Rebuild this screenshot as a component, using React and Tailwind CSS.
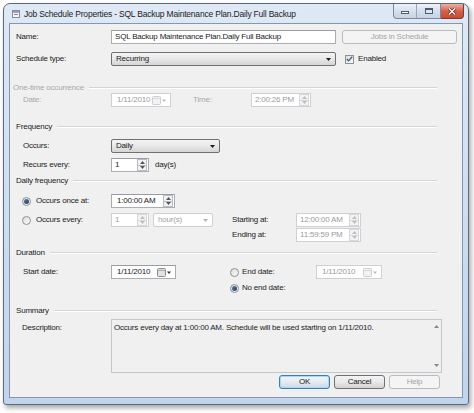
import React from 'react'

const ui = "font-['Liberation_Sans',Arial,sans-serif]"

function Arrow({ up, color = '#2b2b2b' }) {
  return (
    <svg width="5" height="3" viewBox="0 0 5 3">
      <path d={up ? 'M0 3H5L2.5 0Z' : 'M0 0H5L2.5 3Z'} fill={color} />
    </svg>
  )
}

function TextBox({ value, w, disabled, children, pad = 'pl-[3px]' }) {
  return (
    <div
      className={`${w} h-full shrink-0 flex items-center border bg-white ${
        disabled ? 'border-[#cdd0d4] text-[#9c9c9c]' : 'border-[#abadb3] border-t-[#9a9ca3]'
      }`}
    >
      <span className={`${pad} flex-1 whitespace-nowrap`}>{value}</span>
      {children}
    </div>
  )
}

function Spin({ value, w, disabled, pad }) {
  const edge = disabled ? 'border-[#d6d8db]' : 'border-[#b9bcc2]'
  const c = disabled ? '#bdbdbd' : '#555'
  return (
    <TextBox value={value} w={w} disabled={disabled} pad={pad}>
      <div className={`w-[10px] h-[12px] mr-[1px] flex flex-col border ${edge} bg-[#f3f3f3]`}>
        <div className={`flex-1 flex items-center justify-center border-b ${edge}`}>
          <Arrow up color={c} />
        </div>
        <div className="flex-1 flex items-center justify-center">
          <Arrow color={c} />
        </div>
      </div>
    </TextBox>
  )
}

function DatePick({ value, w, disabled }) {
  return (
    <TextBox value={value} w={w} disabled={disabled} pad="pl-[5px]">
      <svg width="15" height="9" viewBox="0 0 15 9" className="mr-[3px]">
        <rect x="0.5" y="0.5" width="8" height="8" rx="1" fill={disabled ? '#f2f2f2' : '#e2e2e2'} stroke={disabled ? '#cfcfcf' : '#8c8c8c'} />
        <path d="M1 2.5H8" stroke={disabled ? '#d8d8d8' : '#a8a8a8'} />
        <path d="M10 3.5H14L12 6Z" fill={disabled ? '#bcbcbc' : '#333'} />
      </svg>
    </TextBox>
  )
}

function Combo({ value, w, disabled }) {
  return (
    <div
      className={`${w} h-full shrink-0 flex items-center rounded-[2px] border ${
        disabled
          ? 'border-[#cdd0d4] bg-white text-[#a3a3a3]'
          : 'border-[#707070] bg-gradient-to-b from-[#f4f4f4] via-[#e8e8e8] to-[#d5d5d5]'
      }`}
    >
      <span className="pl-[4px] flex-1 whitespace-nowrap">{value}</span>
      <span className="mr-[4px] flex">
        <Arrow color={disabled ? '#b5b5b5' : '#1a1a1a'} />
      </span>
    </div>
  )
}

function Radio({ checked }) {
  return (
    <span className="w-[9px] h-[9px] shrink-0 rounded-full border border-[#8e9094] bg-gradient-to-br from-[#dcdcdc] to-[#fafafa] flex items-center justify-center">
      {checked && <span className="w-[5px] h-[5px] rounded-full bg-gradient-to-br from-[#5a7ea8] to-[#1f3c5e]" />}
    </span>
  )
}

function Button({ children, kind = 'normal', w = 'w-[51px]' }) {
  const look = {
    normal: 'border-[#707070] bg-gradient-to-b from-[#f3f3f3] via-[#e9e9e9] to-[#d3d3d3] text-[#1b1b1b]',
    default: 'border-[#3c7fb1] bg-gradient-to-b from-[#f1f6fa] via-[#e3ebf2] to-[#cfd9e3] text-[#1b1b1b] shadow-[inset_0_0_0_1px_#a8d8f3]',
    disabled: 'border-[#b7bcc0] bg-[#f4f4f4] text-[#a5a5a5]',
  }[kind]
  return (
    <div className={`${w} h-full shrink-0 flex items-center justify-center rounded-[3px] border ${look}`}>
      {children}
    </div>
  )
}

function Group({ title, muted, className = '' }) {
  return (
    <div className={`flex items-center h-[10px] pr-[25px] ${className}`}>
      <span className={muted ? 'pl-[3px] text-[#a9a9a9]' : 'pl-[6px]'}>{title}</span>
      <div className="flex-1 ml-[5px] h-[2px] border-t border-[#d2d4d8] border-b border-b-white" />
    </div>
  )
}

function Row({ className = '', children }) {
  return <div className={`flex items-center h-[14px] ${className}`}>{children}</div>
}

function Label({ children, indent = 'pl-[13px]', muted }) {
  return (
    <div className={`w-[101px] shrink-0 ${indent} ${muted ? 'text-[#a9a9a9]' : ''}`}>{children}</div>
  )
}

function RadioLabel({ checked, children }) {
  return (
    <div className="w-[101px] shrink-0 pl-[12px] flex items-center gap-[5px]">
      <Radio checked={checked} />
      <span>{children}</span>
    </div>
  )
}

function TitleBar() {
  return (
    <div className="h-[19px] shrink-0 flex items-start pr-[4px]">
      <div className="h-full flex items-center gap-[4px] pl-[8px] pt-[1px]">
        <svg width="8" height="8" viewBox="0 0 8 8">
          <rect x="0.5" y="0.5" width="7" height="7" fill="#f4f6fa" stroke="#7f8ea6" />
          <rect x="1" y="1" width="6" height="2" fill="#8fa6c8" />
          <rect x="2" y="4" width="4" height="1" fill="#c46a6a" />
        </svg>
        <span className="text-[8.5px] text-[#1c1c1c] whitespace-nowrap">
          Job Schedule Properties - SQL Backup Maintenance Plan.Daily Full Backup
        </span>
      </div>
      <div className="ml-auto flex">
        <div className="flex h-[15px] rounded-bl-[4px] border border-t-0 border-[#7a899e] bg-gradient-to-b from-[#eef2f7] via-[#d6dfeb] to-[#c6d2e3] overflow-hidden">
          <div className="w-[23px] flex items-center justify-center border-r border-[#98a6b9]">
            <span className="w-[8px] h-[3px] mt-[3px] bg-white border border-[#4c5b72]" />
          </div>
          <div className="w-[23px] flex items-center justify-center">
            <span className="w-[8px] h-[6px] border border-[#4c5b72] border-t-2 bg-[#dfe6f0]" />
          </div>
        </div>
        <div className="w-[23px] h-[15px] rounded-br-[4px] border border-t-0 border-l-0 border-[#7d3b31] bg-gradient-to-b from-[#eab0a4] via-[#d5604b] to-[#c84a33] flex items-center justify-center">
          <svg width="8" height="7" viewBox="0 0 8 7">
            <path d="M1 0.5L7 6.5M7 0.5L1 6.5" stroke="#5b1f16" strokeWidth="2.6" />
            <path d="M1 0.5L7 6.5M7 0.5L1 6.5" stroke="#fff" strokeWidth="1.4" />
          </svg>
        </div>
      </div>
    </div>
  )
}

export default function App() {
  return (
    <div className={`w-[474px] h-[413px] bg-white overflow-hidden ${ui} text-[8px] text-[#1b1b1b] tracking-[-0.2px]`}>
      <div className="ml-[3px] mt-[3px] w-[466px] h-[402px] flex flex-col rounded-t-[7px] rounded-b-[3px] border border-[#5b6a7e] bg-gradient-to-b from-[#dfe9f5] via-[#cfdef0] to-[#c2d4eb] shadow-[2px_3px_5px_rgba(0,0,0,0.35)]">
        <TitleBar />

        <div className="mx-[5px] flex-1 border border-[#8497b0] bg-[#f0f0f0] pt-[6px]">
          <Row>
            <Label indent="pl-[6px]">Name:</Label>
            <TextBox w="w-[225px]" value="SQL Backup Maintenance Plan.Daily Full Backup" />
            <div className="ml-[6px] h-full">
              <Button kind="disabled" w="w-[115px]">Jobs in Schedule</Button>
            </div>
          </Row>

          <Row className="mt-[8px]">
            <Label indent="pl-[6px]">Schedule type:</Label>
            <Combo w="w-[225px]" value="Recurring" />
            <span className="ml-[9px] w-[9px] h-[9px] border border-[#8e9094] bg-gradient-to-br from-[#dedede] to-[#fafafa] flex items-center justify-center">
              <svg width="7" height="6" viewBox="0 0 7 6">
                <path d="M0.8 3L2.6 4.9L6.2 0.8" stroke="#3f5a8a" strokeWidth="1.3" fill="none" />
              </svg>
            </span>
            <span className="ml-[4px]">Enabled</span>
          </Row>

          <Group title="One-time occurrence" muted className="mt-[17px]" />
          <Row>
            <Label muted>Date:</Label>
            <DatePick w="w-[60px]" value="1/11/2010" disabled />
            <span className="ml-[22px] w-[58px] text-[#a9a9a9]">Time:</span>
            <Spin w="w-[60px]" value="2:00:26 PM" disabled />
          </Row>

          <Group title="Frequency" className="mt-[15px]" />
          <Row className="mt-[7px]">
            <Label>Occurs:</Label>
            <Combo w="w-[109px]" value="Daily" />
          </Row>
          <Row className="mt-[5px]">
            <Label>Recurs every:</Label>
            <Spin w="w-[38px]" value="1" />
            <span className="ml-[6px]">day(s)</span>
          </Row>

          <Group title="Daily frequency" className="mt-[4px]" />
          <Row className="mt-[8px]">
            <RadioLabel checked>Occurs once at:</RadioLabel>
            <Spin w="w-[64px]" value="1:00:00 AM" pad="pl-[5px]" />
          </Row>
          <Row className="mt-[5px]">
            <RadioLabel>Occurs every:</RadioLabel>
            <Spin w="w-[38px]" value="1" disabled />
            <div className="ml-[4px] h-full">
              <Combo w="w-[60px]" value="hour(s)" disabled />
            </div>
            <span className="ml-[19px] w-[64px]">Starting at:</span>
            <Spin w="w-[65px]" value="12:00:00 AM" disabled />
          </Row>
          <Row className="mt-[1px]">
            <span className="ml-[222px] w-[64px]">Ending at:</span>
            <Spin w="w-[65px]" value="11:59:59 PM" disabled />
          </Row>

          <Group title="Duration" className="mt-[6px]" />
          <Row className="mt-[7px]">
            <Label>Start date:</Label>
            <DatePick w="w-[65px]" value="1/11/2010" />
            <div className="ml-[54px] w-[86px] flex items-center gap-[3px]">
              <Radio />
              <span>End date:</span>
            </div>
            <DatePick w="w-[66px]" value="1/11/2010" disabled />
          </Row>
          <Row className="mt-[2px]">
            <div className="ml-[220px] flex items-center gap-[3px]">
              <Radio checked />
              <span>No end date:</span>
            </div>
          </Row>

          <Group title="Summary" className="mt-[11px]" />
          <div className="mt-[3px] flex">
            <div className="w-[101px] shrink-0 pl-[12px] pt-[3px]">Description:</div>
            <div className="w-[331px] h-[54px] flex border border-[#c3c6cb] bg-[#f0f0f0]">
              <div className="flex-1 pl-[2px] pt-[3px] leading-[10px]">
                Occurs every day at 1:00:00 AM. Schedule will be used starting on 1/11/2010.
              </div>
              <div className="w-[10px] flex flex-col items-center justify-between py-[5px]">
                <Arrow up color="#8a8a8a" />
                <Arrow color="#8a8a8a" />
              </div>
            </div>
          </div>

          <Row className="mt-[2px] pl-[269px] gap-[4px]">
            <Button kind="default">OK</Button>
            <Button>Cancel</Button>
            <Button kind="disabled">Help</Button>
          </Row>
        </div>

        <div className="h-[6px] shrink-0" />
      </div>
    </div>
  )
}
